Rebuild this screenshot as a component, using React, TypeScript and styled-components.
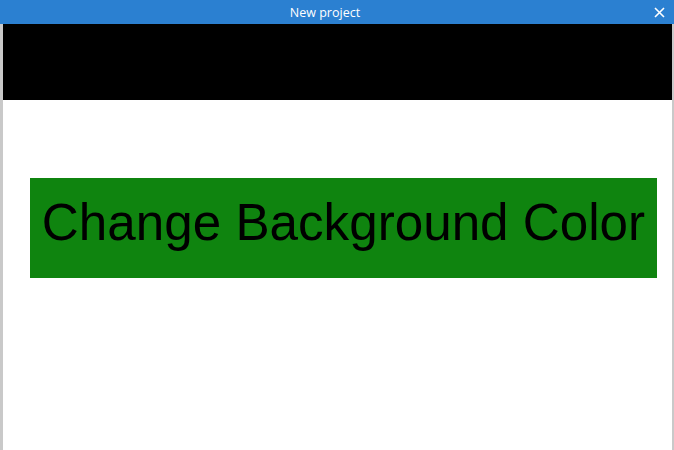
import React from "react";
import styled, { createGlobalStyle } from "styled-components";

const Global = createGlobalStyle`
  html, body { margin: 0; padding: 0; background: #ffffff; }
  #root { height: 450px; }
`;

const Window = styled.div`
  width: 674px;
  height: 450px;
  display: flex;
  flex-direction: column;
  overflow: hidden;
`;

const TitleBar = styled.div`
  height: 24px;
  flex: none;
  box-sizing: border-box;
  padding-right: 24px;
  background: #2b80d1;
  color: #ffffff;
  display: flex;
  align-items: center;
  justify-content: center;
  position: relative;
  font-family: "Open Sans", "Noto Sans", sans-serif;
  font-size: 12.5px;
`;

const CloseButton = styled.div`
  position: absolute;
  right: 8px;
  top: 5px;
  width: 14px;
  height: 14px;
  display: flex;
  align-items: center;
  justify-content: center;
`;

const Body = styled.div`
  flex: 1;
  display: flex;
  flex-direction: column;
  border-left: 3px solid #c9c9c9;
  border-right: 2px solid #c9c9c9;
  background: #ffffff;
`;

const Banner = styled.div`
  height: 76px;
  background: #000000;
  flex: none;
`;

const Content = styled.div`
  padding: 78px 15px 0 27px;
  display: flex;
`;

const ColorButton = styled.div`
  width: 627px;
  height: 100px;
  box-sizing: border-box;
  padding-bottom: 12px;
  background: #0f840f;
  color: #000000;
  display: flex;
  align-items: center;
  justify-content: center;
  font-family: "Liberation Sans", Arial, sans-serif;
  font-size: 51.2px;
`;

export default function App() {
  return (
    <>
      <Global />
      <Window>
        <TitleBar>
          New project
          <CloseButton>
            <svg width="11" height="11" viewBox="0 0 11 11">
              <path d="M1 1 L10 10 M10 1 L1 10" stroke="#ffffff" strokeWidth="1.6" />
            </svg>
          </CloseButton>
        </TitleBar>
        <Body>
          <Banner />
          <Content>
            <ColorButton>Change Background Color</ColorButton>
          </Content>
        </Body>
      </Window>
    </>
  );
}
